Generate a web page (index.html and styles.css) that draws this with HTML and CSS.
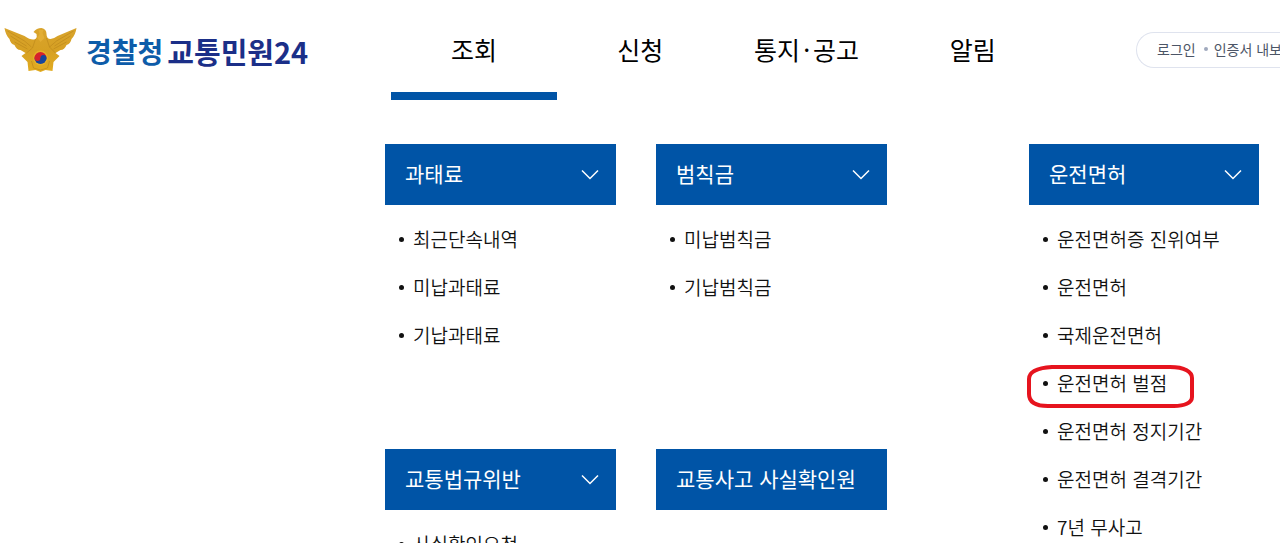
FILE: index.html
```html
<!DOCTYPE html>
<html lang="ko">
<head>
<meta charset="utf-8">
<title>경찰청 교통민원24</title>
<link rel="stylesheet" href="styles.css">
</head>
<body>
<svg class="defs" aria-hidden="true">
  <symbol id="chevron" viewBox="0 0 18 12"><path d="M1 1.5 9 9.5 17 1.5" fill="none" stroke="currentColor" stroke-width="1.5"/></symbol>
</svg>
<header class="header">
  <a class="logo" href="#">
    <svg class="emblem" viewBox="0 0 72 46" aria-hidden="true">
      <defs>
        <linearGradient id="gold" x1="0" y1="0" x2="0" y2="1">
          <stop offset="0" stop-color="#d9a42c"/><stop offset=".5" stop-color="#d6a023"/><stop offset="1" stop-color="#e2ac20"/>
        </linearGradient>
      </defs>
      <path fill="url(#gold)" d="M0 1 L20 9 Q27 14 31 12 Q33 10 32 7 L29 5 Q32 1 37 1 Q42 2 42 7 Q42 12 46 12 Q49 12 53 9 L72 1 Q71 8 67 12 Q66 17 62 18 Q60 23 56 23 L51 26 L55 29 L49 35 L48 44 L41 43 L36 45 L31 43 L24 44 L23 35 L17 29 L21 26 L16 23 Q12 23 10 18 Q6 17 5 12 Q1 8 0 1Z"/>
      <g fill="none" stroke="#b98519" stroke-width=".6">
        <path d="M3 4 20 14 27 20M6 9 22 19M10 15 23 22M69 4 52 14 45 20M66 9 50 19M62 15 49 22"/>
        <path d="M31 12 28 21 22 26M42 11 45 20 51 26M27 34 29 41 36 43 43 41 45 34"/>
      </g>
      <path fill="#e3ae34" d="M34 3 39 3 38 6 40 11 36 15 33 11 35 7Z"/>
      <circle cx="36" cy="31" r="7.4" fill="#e8b128"/>
      <path d="M30 31a6 6 0 0 1 12 0Z" fill="#d5222c"/>
      <path d="M30 31a6 6 0 0 0 12 0Z" fill="#17469b"/>
      <circle cx="33" cy="31" r="3" fill="#d5222c"/>
      <circle cx="39" cy="31" r="3" fill="#17469b"/>
    </svg>
    <span class="brand"><span class="brand-agency">경찰청</span> <span class="brand-service">교통민원24</span></span>
  </a>
  <nav class="tabs">
    <a class="tab tab-active" href="#">조회</a>
    <a class="tab" href="#">신청</a>
    <a class="tab" href="#">통지<span class="dot">·</span>공고</a>
    <a class="tab" href="#">알림</a>
  </nav>
  <div class="account">
    <a href="#">로그인</a><span class="separator"></span><a href="#">인증서 내보내기</a>
  </div>
</header>
<main class="menu">
  <div class="menu-pair">
    <section>
      <button class="menu-title" type="button">과태료<svg class="chevron"><use href="#chevron"/></svg></button>
      <ul class="links">
        <li><a href="#">최근단속내역</a></li>
        <li><a href="#">미납과태료</a></li>
        <li><a href="#">기납과태료</a></li>
      </ul>
    </section>
    <section>
      <button class="menu-title" type="button">범칙금<svg class="chevron"><use href="#chevron"/></svg></button>
      <ul class="links">
        <li><a href="#">미납범칙금</a></li>
        <li><a href="#">기납범칙금</a></li>
      </ul>
    </section>
    <section>
      <button class="menu-title" type="button">교통법규위반<svg class="chevron"><use href="#chevron"/></svg></button>
      <ul class="links">
        <li><a href="#">사실확인요청</a></li>
      </ul>
    </section>
    <section>
      <button class="menu-title" type="button">교통사고 사실확인원</button>
    </section>
  </div>
  <section class="menu-license">
    <button class="menu-title" type="button">운전면허<svg class="chevron"><use href="#chevron"/></svg></button>
    <ul class="links">
      <li><a href="#">운전면허증 진위여부</a></li>
      <li><a href="#">운전면허</a></li>
      <li><a href="#">국제운전면허</a></li>
      <li class="marked"><a href="#">운전면허 벌점</a>
        <svg class="ring" viewBox="0 0 168 44" aria-hidden="true"><path d="M25 2H143C158 2 165 7 165 13V32C165 38 157 41 147 41H21C9 41 2 37 2 29V14C2 7 9 3 25 2Z" fill="none" stroke="#e6141e" stroke-width="4"/></svg>
      </li>
      <li><a href="#">운전면허 정지기간</a></li>
      <li><a href="#">운전면허 결격기간</a></li>
      <li><a href="#">7년 무사고</a></li>
    </ul>
  </section>
</main>
</body>
</html>
```
FILE: styles.css
```css
* { box-sizing: border-box; }
body {
  margin: 0;
  height: 100vh;
  overflow: hidden;
  background: #fff;
  color: #111;
  font-family: "Noto Sans CJK KR", sans-serif;
}
a { color: inherit; text-decoration: none; }
.defs { position: absolute; width: 0; height: 0; }

.header {
  display: grid;
  grid-template-columns: 391px minmax(0, 665fr) minmax(0, 224fr);
  align-items: start;
}
.logo {
  display: flex;
  align-items: center;
  gap: 9px;
  height: 100px;
  padding-left: 4px;
}
.emblem { flex: none; width: 73px; height: 46px; }
.brand { display: flex; align-items: center; gap: 4px; padding-top: 2px; font-weight: 700; line-height: 40px; white-space: nowrap; }
.brand-agency { color: #0d5ca9; font-size: 28px; }
.brand-service { color: #1b2f88; font-size: 29px; }

.tabs { display: flex; }
.tab {
  flex: 1 1 0;
  height: 100px;
  border-bottom: 8px solid transparent;
  color: #000;
  font-size: 25px;
  line-height: 98px;
  text-align: center;
  white-space: nowrap;
}
.tab-active { border-color: #0054a6; }
.dot { margin: 0 3px; }

.account {
  display: flex;
  align-items: center;
  height: 36px;
  margin: 32px 0 0 80px;
  padding: 0 0 2px 20px;
  border: 1px solid #dfe3ee;
  border-right: 0;
  border-radius: 18px 0 0 18px;
  color: #4c5566;
  font-size: 14px;
  white-space: nowrap;
  overflow: hidden;
}
.separator { flex: none; width: 4px; height: 4px; margin: 0 6px 0 8px; border-radius: 50%; background: #a0a9bd; }

.menu { display: flex; align-items: flex-start; gap: 142px; padding: 44px 21px 0 385px; }
.menu-pair { display: grid; flex: 502; grid-template-columns: 1fr 1fr; gap: 91px 40px; }
.menu-license { flex: 230; }
.menu-title {
  display: flex;
  align-items: center;
  justify-content: space-between;
  width: 100%;
  height: 61px;
  padding: 0 17px 4px 20px;
  border: 0;
  background: #0054a6;
  color: #fff;
  font: 400 21px/30px "Noto Sans CJK KR", sans-serif;
  white-space: nowrap;
}
.chevron { width: 18px; height: 12px; margin-top: 4px; }
.links { margin: 0; padding: 9px 0 0 14px; list-style: none; }
.links li {
  display: flex;
  align-items: center;
  gap: 9px;
  height: 48px;
  font-size: 19px;
  font-weight: 350;
  white-space: nowrap;
}
.links li::before { content: ""; width: 5px; height: 5px; margin-top: 2px; border-radius: 50%; background: #111; }
.marked { position: relative; }
.ring { position: absolute; top: 7px; left: -16px; width: 168px; height: 44px; pointer-events: none; }
```
